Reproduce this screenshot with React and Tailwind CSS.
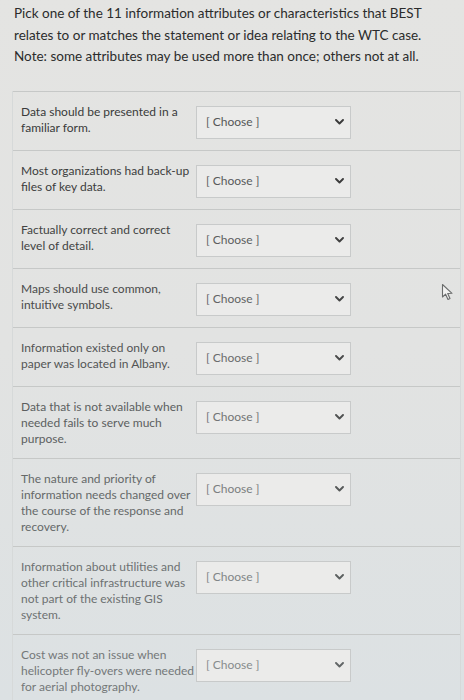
import React from "react";

const rows = [
  { text: "Data should be presented in a familiar form.", tone: "text-[#393a3a]", sel: "text-[#555757]", chev: "#3a3a3a" },
  { text: "Most organizations had back-up files of key data.", tone: "text-[#3c3d3d]", sel: "text-[#585a5a]", chev: "#3c3c3c" },
  { text: "Factually correct and correct level of detail.", tone: "text-[#424343]", sel: "text-[#5c5e5e]", chev: "#404040" },
  { text: "Maps should use common, intuitive symbols.", tone: "text-[#4a4b4b]", sel: "text-[#626464]", chev: "#444545" },
  { text: "Information existed only on paper was located in Albany.", tone: "text-[#535555]", sel: "text-[#6a6c6c]", chev: "#4a4b4b" },
  { text: "Data that is not available when needed fails to serve much purpose.", tone: "text-[#5c5f5f]", sel: "text-[#727575]", chev: "#505252" },
  { text: "The nature and priority of information needs changed over the course of the response and recovery.", tone: "text-[#656969]", sel: "text-[#7b7f80]", chev: "#565959" },
  { text: "Information about utilities and other critical infrastructure was not part of the existing GIS system.", tone: "text-[#6d7172]", sel: "text-[#818687]", chev: "#5c6060" },
  { text: "Cost was not an issue when helicopter fly-overs were needed for aerial photography.", tone: "text-[#747879]", sel: "text-[#878c8d]", chev: "#626667" },
];

const Chevron = ({ color }) => (
  <svg width="9" height="6" viewBox="0 0 9 6" fill="none">
    <path d="M1 1 L4.5 4.5 L8 1" stroke={color} strokeWidth="1.9" strokeLinecap="round" strokeLinejoin="round" />
  </svg>
);

const App = () => {
  return (
    <div className="relative min-h-[700px] h-[700px] overflow-hidden bg-gradient-to-b from-[#e4e4e2] via-[#e2e3e2] to-[#dce1e3] font-[Lato,sans-serif]">
      {/* Question prompt */}
      <div className="px-[14px] pt-[3px] text-[13.5px] leading-[21.5px] text-[#2b2c2c]">
        Pick one of the 11 information attributes or characteristics that BEST
        relates to or matches the statement or idea relating to the WTC case.
        Note: some attributes may be used more than once; others not at all.
      </div>

      {/* Matching rows */}
      <div className="mt-[23px] ml-[12px] mr-[3px] border-l border-r border-[#d6d9d9]">
        {rows.map((row, i) => (
          <div key={i} className="flex items-start border-t border-[#c6c8c7] pt-[12px] pb-[11px] pl-[8px]">
            <div className={`w-[175px] pr-[1px] text-[12px] leading-[16px] ${row.tone}`}>
              {row.text}
            </div>
            <div className="mt-[2px] flex h-[33px] w-[155px] items-center justify-between border border-[#c8caca] bg-[#ebebea] pl-[9px] pr-[6px]">
              <span className={`text-[12px] ${row.sel}`}>[ Choose ]</span>
              <Chevron color={row.chev} />
            </div>
          </div>
        ))}
      </div>

      {/* Mouse pointer */}
      <svg className="absolute left-[441px] top-[283px]" width="14" height="18" viewBox="0 0 14 18" fill="none">
        <path d="M1.5 1.5 L1.5 14 L4.6 11.2 L7 16.5 L9 15.6 L6.7 10.5 L11 10.3 Z" fill="#f2f2f1" stroke="#6a6c6c" strokeWidth="1.1" strokeLinejoin="round" />
      </svg>
    </div>
  );
};

export default App;
